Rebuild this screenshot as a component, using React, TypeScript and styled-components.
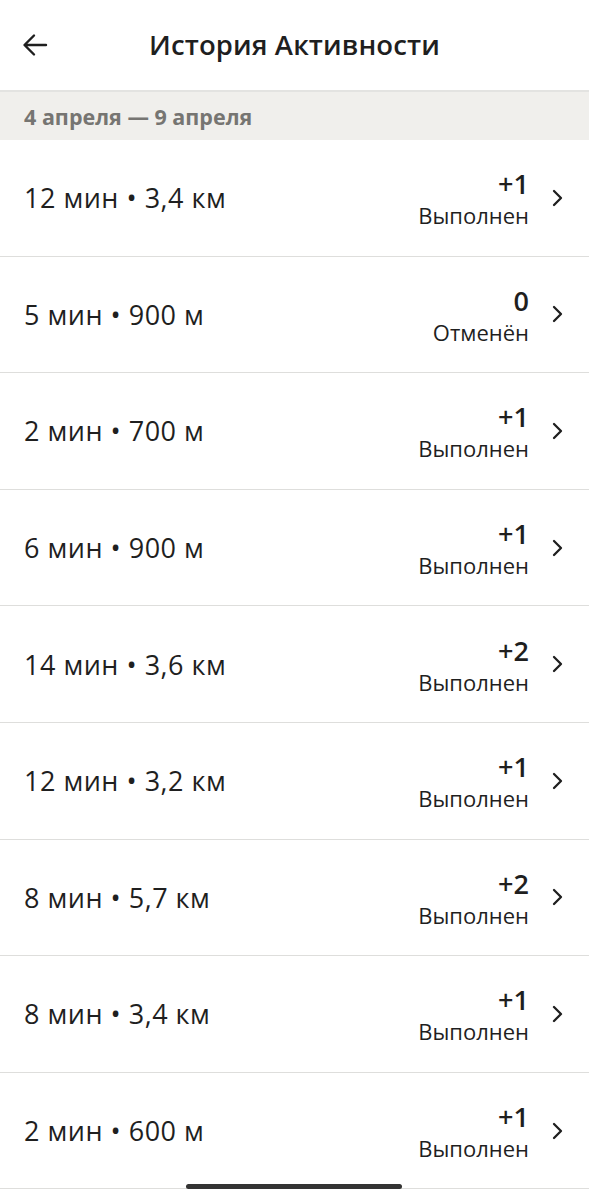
import React from "react";
import styled, { createGlobalStyle } from "styled-components";

const GlobalStyle = createGlobalStyle`
  html, body {
    margin: 0;
    padding: 0;
    background: #ffffff;
  }
  body {
    font-family: "Open Sans", "Noto Sans", sans-serif;
    color: #1f1f1f;
  }
`;

interface Ride {
  duration: string;
  distance: string;
  points: string;
  status: string;
}

const rides: Ride[] = [
  { duration: "12 мин", distance: "3,4 км", points: "+1", status: "Выполнен" },
  { duration: "5 мин", distance: "900 м", points: "0", status: "Отменён" },
  { duration: "2 мин", distance: "700 м", points: "+1", status: "Выполнен" },
  { duration: "6 мин", distance: "900 м", points: "+1", status: "Выполнен" },
  { duration: "14 мин", distance: "3,6 км", points: "+2", status: "Выполнен" },
  { duration: "12 мин", distance: "3,2 км", points: "+1", status: "Выполнен" },
  { duration: "8 мин", distance: "5,7 км", points: "+2", status: "Выполнен" },
  { duration: "8 мин", distance: "3,4 км", points: "+1", status: "Выполнен" },
  { duration: "2 мин", distance: "600 м", points: "+1", status: "Выполнен" },
];

const App = () => {
  return (
    <Screen>
      <GlobalStyle />
      <Header>
        <BackButton aria-label="Назад">
          <svg width="26" height="26" viewBox="0 0 26 26" fill="none">
            <path
              d="M24 13H3M12 3.5L2.5 13L12 22.5"
              stroke="#1f1f1f"
              strokeWidth="2.4"
              strokeLinecap="round"
              strokeLinejoin="round"
            />
          </svg>
        </BackButton>
        <Title>История Активности</Title>
      </Header>
      <SectionTitle>4 апреля — 9 апреля</SectionTitle>
      <List>
        {rides.map((ride, i) => (
          <Row key={i}>
            <RideInfo>
              {ride.duration} • {ride.distance}
            </RideInfo>
            <Result>
              <Points>{ride.points}</Points>
              <Status>{ride.status}</Status>
            </Result>
            <Chevron viewBox="0 0 14 20" fill="none">
              <path
                d="M3 3L10 10L3 17"
                stroke="#1f1f1f"
                strokeWidth="2.3"
                strokeLinecap="round"
                strokeLinejoin="round"
              />
            </Chevron>
          </Row>
        ))}
      </List>
      <HomeIndicator />
    </Screen>
  );
};

const Screen = styled.div`
  position: relative;
  width: 589px;
  height: 1200px;
  overflow: hidden;
  background: #ffffff;
`;

const Header = styled.header`
  position: relative;
  height: 88px;
  padding-bottom: 2px;
  display: flex;
  align-items: center;
  justify-content: center;
  border-bottom: 2px solid #e3e3e1;
`;

const BackButton = styled.button`
  position: absolute;
  left: 22px;
  top: 32px;
  padding: 0;
  border: none;
  background: none;
  display: flex;
`;

const Title = styled.h1`
  margin: 0;
  font-size: 27.5px;
  font-weight: 600;
  color: #1f1f1f;
  letter-spacing: 0.1px;
`;

const SectionTitle = styled.div`
  height: 48px;
  display: flex;
  align-items: center;
  padding: 0 24px;
  background: #f0efec;
  font-size: 21.5px;
  font-weight: 700;
  color: #767572;
`;

const List = styled.div`
  display: flex;
  flex-direction: column;
`;

const Row = styled.div`
  height: 115.6px;
  display: flex;
  align-items: center;
  padding: 0 24px;
  border-bottom: 1px solid #dededc;
`;

const RideInfo = styled.div`
  flex: 1;
  font-size: 27px;
  letter-spacing: 0.5px;
  color: #1f1f1f;
`;

const Result = styled.div`
  display: flex;
  flex-direction: column;
  align-items: flex-end;
  margin: 6px 22px 0 0;
`;

const Points = styled.div`
  font-size: 27px;
  font-weight: 600;
  line-height: 30px;
  color: #1f1f1f;
`;

const Status = styled.div`
  font-size: 22px;
  line-height: 33px;
  color: #1f1f1f;
`;

const Chevron = styled.svg`
  width: 14px;
  height: 20px;
`;

const HomeIndicator = styled.div`
  position: absolute;
  left: 186px;
  bottom: 11px;
  width: 216px;
  height: 5px;
  border-radius: 3px;
  background: #333333;
`;

export default App;
